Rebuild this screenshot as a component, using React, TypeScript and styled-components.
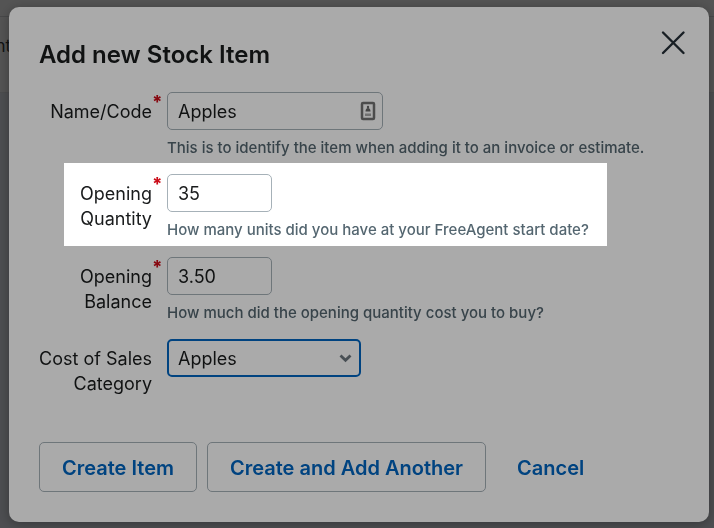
import React from "react";
import styled, { createGlobalStyle, css } from "styled-components";

const GlobalStyle = createGlobalStyle`
  *, *::before, *::after { box-sizing: border-box; }
  body {
    margin: 0;
    overflow: hidden;
    font-family: Inter, "Liberation Sans", sans-serif;
    color: #191b1c;
  }
`;

const Page = styled.div`
  display: flex;
  flex-direction: column;
  min-height: 100vh;
  background: #74767a;
`;

const TopBar = styled.header`
  height: 17px;
  background: #7f7f7f;
  border-bottom: 1px solid #6c6d6e;
`;

const NavBar = styled.nav`
  display: flex;
  align-items: center;
  height: 76px;
  padding-bottom: 18px;
  background: #7f7f7f;
  border-bottom: 1px solid #727375;
  font-size: 17px;
`;

const NavItem = styled.span`
  display: flex;
  justify-content: flex-end;
  width: 11px;
`;

const Backdrop = styled.div`
  position: fixed;
  inset: 0;
  padding: 7px 5px 6px 9px;
  overflow: hidden;
`;

const Dialog = styled.section`
  padding: 30px;
  background: #fff;
  border-radius: 10px;
  box-shadow: 0 2px 12px rgba(0, 0, 0, 0.3);
`;

const DialogHeader = styled.header`
  display: flex;
  align-items: flex-start;
  justify-content: space-between;
  height: 44px;
`;

const Title = styled.h1`
  margin: 0;
  font-size: 24px;
  line-height: 36px;
  font-weight: 600;
`;

const CloseButton = styled.button`
  display: flex;
  margin: -9px -9px 0 0;
  padding: 0;
  border: 0;
  background: none;
  color: #252f37;
`;

const Field = styled.div<{ $highlighted?: boolean }>`
  position: ${(p) => (p.$highlighted ? "relative" : "static")};
  display: grid;
  grid-template-columns: 128px 1fr;
  align-items: start;
  min-height: ${(p) => (p.$highlighted ? 83 : 82)}px;
  padding-top: 11px;
`;

const Label = styled.label`
  display: grid;
  grid-template-columns: 113px 12px;
  font-size: 18px;
  line-height: 25px;
  text-align: right;
`;

const LabelText = styled.span`
  padding-top: 7px;
`;

const Required = styled.span`
  color: #cb0c18;
  font-size: 18px;
  line-height: 20px;
  font-weight: 800;
  text-align: left;
`;

const Control = styled.div`
  display: flex;
  flex-direction: column;
  align-items: flex-start;
`;

const controlStyle = css`
  width: 100%;
  height: 38px;
  padding: 0 10px;
  border: 1px solid #a6b1b8;
  border-radius: 5px;
  background: transparent;
  color: #191b1c;
  font-family: inherit;
  font-size: 18px;
  outline: none;
`;

const InputShell = styled.div<{ $width: number }>`
  display: grid;
  align-items: center;
  width: ${(p) => p.$width}px;
  max-width: 100%;

  > * {
    grid-area: 1 / 1;
  }

  > svg {
    justify-self: end;
    margin-right: 7px;
    pointer-events: none;
  }
`;

const TextInput = styled.input`
  ${controlStyle}
`;

const Select = styled.select`
  ${controlStyle}
  appearance: none;
  padding: 0 9px;
  border: 2px solid #0065c1;
`;

const Help = styled.p`
  margin: 7px 0 0;
  color: #546670;
  font-size: 15px;
  line-height: 22px;
  font-weight: 500;
`;

const Spotlight = styled.div`
  position: absolute;
  z-index: 1;
  inset: 0 72px 0 25px;
  box-shadow: 0 0 0 2000px rgba(0, 0, 0, 0.333);
  pointer-events: none;
`;

const Actions = styled.footer`
  display: flex;
  gap: 10px;
  margin-top: 32px;
`;

const Button = styled.button<{ $plain?: boolean }>`
  height: 50px;
  padding: 2px ${(p) => (p.$plain ? 20 : 22)}px 0;
  border: 1px solid ${(p) => (p.$plain ? "transparent" : "#a6b1b8")};
  border-radius: 5px;
  background: none;
  color: #0065c1;
  font-family: inherit;
  font-size: 20px;
  font-weight: 600;
  white-space: nowrap;
`;

const CloseIcon = () => (
  <svg width="30" height="30" viewBox="0 0 30 30" fill="none" stroke="currentColor" strokeWidth="2.4" strokeLinecap="round" aria-hidden="true">
    <path d="M5 4.500 25.500 25M25.500 4.500 5 25" />
  </svg>
);

const ContactIcon = () => (
  <svg width="16" height="20" viewBox="0 0 16 20" aria-hidden="true">
    <rect x="2" y="2" width="12" height="16" rx="1" fill="none" stroke="#737373" strokeWidth="2.500" />
    <circle cx="8" cy="6" r="1.200" fill="#686868" />
    <path d="M5.500 10.500c0-2 1-3.500 2.500-3.500s2.500 1.500 2.500 3.500z" fill="#686868" />
    <path d="M5 12.500h6v2.500H5z" fill="#aaa" />
  </svg>
);

const ChevronIcon = () => (
  <svg width="16" height="14" viewBox="0 0 16 14" fill="none" stroke="#6d777f" strokeWidth="2.800" aria-hidden="true">
    <path d="M2.500 4.500 7.500 9.300l5-4.800" />
  </svg>
);

type FieldRowProps = {
  id: string;
  label: string;
  required?: boolean;
  help?: string;
  highlighted?: boolean;
  children: React.ReactNode;
};

const FieldRow = ({ id, label, required, help, highlighted, children }: FieldRowProps) => (
  <Field $highlighted={highlighted}>
    <Label htmlFor={id}>
      <LabelText>{label}</LabelText>
      {required && <Required>*</Required>}
    </Label>
    <Control>
      {children}
      {help && <Help id={`${id}-help`}>{help}</Help>}
    </Control>
    {highlighted && <Spotlight />}
  </Field>
);

export default function App() {
  return (
    <>
      <GlobalStyle />
      <Page>
        <TopBar />
        <NavBar>
          <NavItem>nt</NavItem>
        </NavBar>
      </Page>
      <Backdrop>
        <Dialog role="dialog" aria-modal="true" aria-labelledby="dialog-title">
          <DialogHeader>
            <Title id="dialog-title">Add new Stock Item</Title>
            <CloseButton type="button" aria-label="Close">
              <CloseIcon />
            </CloseButton>
          </DialogHeader>
          <form onSubmit={(e) => e.preventDefault()}>
            <FieldRow id="name" label="Name/Code" required help="This is to identify the item when adding it to an invoice or estimate.">
              <InputShell $width={216}>
                <TextInput id="name" defaultValue="Apples" aria-describedby="name-help" />
                <ContactIcon />
              </InputShell>
            </FieldRow>
            <FieldRow id="quantity" label="Opening Quantity" required highlighted help="How many units did you have at your FreeAgent start date?">
              <InputShell $width={105}>
                <TextInput id="quantity" defaultValue="35" aria-describedby="quantity-help" />
              </InputShell>
            </FieldRow>
            <FieldRow id="balance" label="Opening Balance" required help="How much did the opening quantity cost you to buy?">
              <InputShell $width={105}>
                <TextInput id="balance" defaultValue="3.50" aria-describedby="balance-help" />
              </InputShell>
            </FieldRow>
            <FieldRow id="category" label="Cost of Sales Category">
              <InputShell $width={194}>
                <Select id="category" defaultValue="Apples">
                  <option>Apples</option>
                </Select>
                <ChevronIcon />
              </InputShell>
            </FieldRow>
            <Actions>
              <Button type="submit">Create Item</Button>
              <Button type="button">Create and Add Another</Button>
              <Button type="button" $plain>Cancel</Button>
            </Actions>
          </form>
        </Dialog>
      </Backdrop>
    </>
  );
}
